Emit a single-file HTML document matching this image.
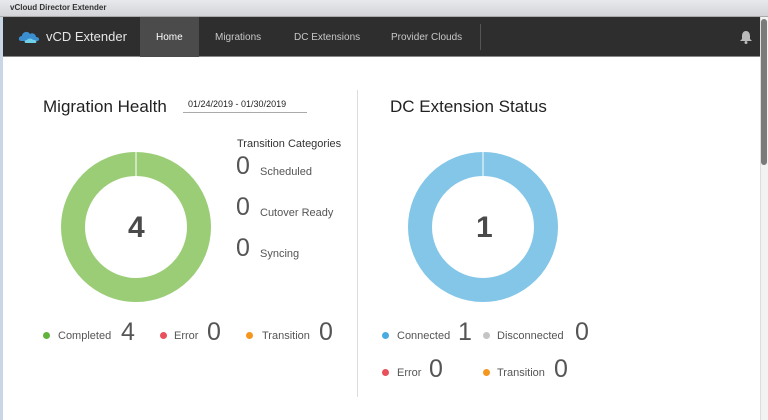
<!DOCTYPE html>
<html><head><meta charset="utf-8"><style>
*{margin:0;padding:0;box-sizing:border-box}
body{width:768px;height:420px;overflow:hidden;background:#fff;font-family:"Liberation Sans",sans-serif;position:relative;color:#333}
.a{position:absolute;white-space:nowrap}
.tb{left:0;top:0;width:768px;height:17px;background:linear-gradient(#e8e9ec,#d3d4d8);border-bottom:1px solid #aaa}
.nav{left:0;top:17px;width:760px;height:40px;background:#2e2e2e;border-bottom:1px solid #888}
.nl{color:#c8c8c8;font-size:10px;top:32px}
.lbl{font-size:11px;color:#555}
.big{font-size:25px;color:#555;font-weight:300}
.dot{width:7px;height:7px;border-radius:50%}
</style></head><body>
<div class="a tb"></div>
<div class="a" style="left:10px;top:3px;font-size:8px;font-weight:bold;color:#333">vCloud Director Extender</div>
<div class="a nav"></div>
<div class="a" style="left:140px;top:17px;width:59px;height:40px;background:#4b4b4b"></div>
<div class="a" style="left:480px;top:24px;width:1px;height:26px;background:#555"></div>
<svg class="a" style="left:18px;top:29px" width="24" height="16" viewBox="0 0 24 16"><path d="M3 12c-3 0-3-5 1-5 0-4 6-6 8-2 2-2 6 0 6 3 4 0 4 4 1 4z" fill="#3b8fd0"/><path d="M8 14c-2 0-2-3 1-3 1-2 5-2 6 0 3-1 5 3 2 3z" fill="#6fd0e8"/></svg>
<div class="a" style="left:46px;top:29px;font-size:13px;color:#e6e6e6">vCD Extender</div>
<div class="a nl" style="left:156px;color:#fff">Home</div>
<div class="a nl" style="left:215px">Migrations</div>
<div class="a nl" style="left:294px">DC Extensions</div>
<div class="a nl" style="left:391px">Provider Clouds</div>
<svg class="a" style="left:739px;top:30px" width="14" height="14" viewBox="0 0 14 14"><path d="M7 1c-3 0-4 3-4 5v3l-2 2h12l-2-2V6c0-2-1-5-4-5z" fill="#bbb"/><circle cx="7" cy="12.5" r="1.5" fill="#bbb"/></svg>
<div class="a" style="left:760px;top:17px;width:8px;height:403px;background:#f2f2f2;border-left:1px solid #ddd"></div>
<div class="a" style="left:761px;top:19px;width:6px;height:146px;background:#7a7a7a;border-radius:3px"></div>
<div class="a" style="left:0;top:17px;width:3px;height:403px;background:#c9d6e6"></div>

<div class="a" style="left:43px;top:97px;font-size:17px;color:#222">Migration Health</div>
<div class="a" style="left:183px;top:99px;width:124px;height:14px;border-bottom:1px solid #aaa;font-size:9px;color:#222;padding-left:5px">01/24/2019 - 01/30/2019</div>
<div class="a" style="left:357px;top:90px;width:1px;height:307px;background:#ddd"></div>
<div class="a" style="left:390px;top:97px;font-size:17px;color:#222">DC Extension Status</div>

<svg class="a" style="left:61px;top:152px" width="150" height="150"><circle cx="75" cy="75" r="63" fill="none" stroke="#9bcd77" stroke-width="24"/><line x1="75" y1="0" x2="75" y2="25" stroke="#fff" stroke-width="1"/></svg>
<div class="a" style="left:128px;top:211px;font-size:30px;font-weight:bold;color:#4a4a4a">4</div>
<svg class="a" style="left:408px;top:152px" width="150" height="150"><circle cx="75" cy="75" r="63" fill="none" stroke="#83c6e8" stroke-width="24"/><line x1="75" y1="0" x2="75" y2="25" stroke="#fff" stroke-width="1"/></svg>
<div class="a" style="left:476px;top:211px;font-size:30px;font-weight:bold;color:#4a4a4a">1</div>

<div class="a" style="left:237px;top:138px;font-size:11px;color:#333">Transition Categories</div>
<div class="a big" style="left:236px;top:152px">0</div><div class="a lbl" style="left:260px;top:166px">Scheduled</div>
<div class="a big" style="left:236px;top:193px">0</div><div class="a lbl" style="left:260px;top:207px">Cutover Ready</div>
<div class="a big" style="left:236px;top:234px">0</div><div class="a lbl" style="left:260px;top:248px">Syncing</div>

<div class="a dot" style="left:43px;top:332px;background:#62b33b"></div><div class="a lbl" style="left:58px;top:330px">Completed</div><div class="a big" style="left:121px;top:318px">4</div>
<div class="a dot" style="left:160px;top:332px;background:#e8505b"></div><div class="a lbl" style="left:174px;top:330px">Error</div><div class="a big" style="left:207px;top:318px">0</div>
<div class="a dot" style="left:246px;top:332px;background:#f5961e"></div><div class="a lbl" style="left:262px;top:330px">Transition</div><div class="a big" style="left:319px;top:318px">0</div>

<div class="a dot" style="left:382px;top:332px;background:#49abe0"></div><div class="a lbl" style="left:397px;top:330px">Connected</div><div class="a big" style="left:458px;top:318px">1</div>
<div class="a dot" style="left:483px;top:332px;background:#c4c4c4"></div><div class="a lbl" style="left:497px;top:330px">Disconnected</div><div class="a big" style="left:575px;top:318px">0</div>
<div class="a dot" style="left:382px;top:369px;background:#e8505b"></div><div class="a lbl" style="left:397px;top:367px">Error</div><div class="a big" style="left:429px;top:355px">0</div>
<div class="a dot" style="left:483px;top:369px;background:#f5961e"></div><div class="a lbl" style="left:497px;top:367px">Transition</div><div class="a big" style="left:554px;top:355px">0</div>
</body></html>
